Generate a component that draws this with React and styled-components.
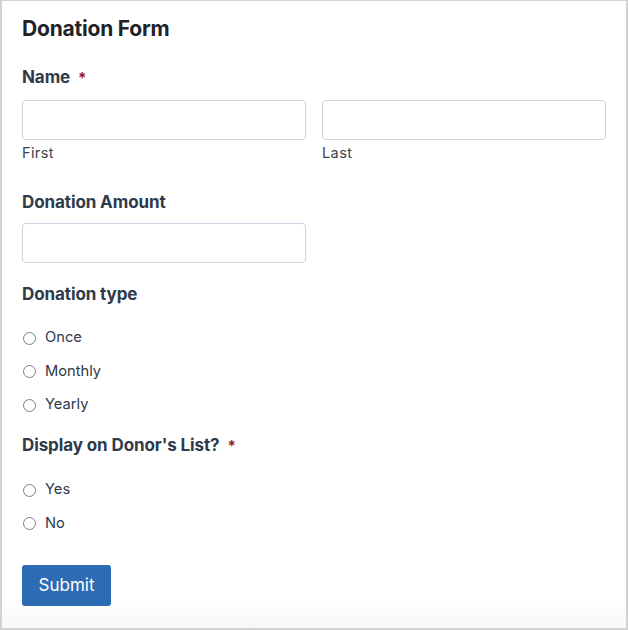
import React from 'react';
import styled, { createGlobalStyle } from 'styled-components';

const GlobalStyle = createGlobalStyle`
  html, body {
    margin: 0;
    padding: 0;
    background: #ffffff;
  }
  * {
    box-sizing: border-box;
  }
`;

const Frame = styled.div`
  width: 628px;
  height: 630px;
  border: 2px solid #d2d2d2;
  border-top-width: 1px;
  border-bottom-width: 2px;
  background: linear-gradient(to bottom, #ffffff 0, #ffffff 600px, #f6f6f6 630px);
  padding: 14px 20px 0 20px;
  font-family: Inter, "Noto Sans", sans-serif;
  color: #2c3338;
`;

const Title = styled.h2`
  margin: 0;
  font-size: 21px;
  font-weight: 700;
  line-height: 28px;
  color: #1d2327;
  letter-spacing: -0.2px;
`;

const Field = styled.div`
  margin-top: ${(p) => p.$top || 0}px;
`;

const Label = styled.div`
  font-size: 17px;
  font-weight: 700;
  line-height: 22px;
  color: #2f3a4a;
  letter-spacing: -0.1px;
`;

const Required = styled.span`
  color: #9b1c1c;
  margin-left: 8px;
  font-size: 15px;
`;

const Row = styled.div`
  display: flex;
  gap: 16px;
  margin-top: ${(p) => p.$top || 0}px;
`;

const Column = styled.div`
  width: 284px;
  display: flex;
  flex-direction: column;
`;

const Input = styled.input`
  width: 100%;
  height: 40px;
  border: 1px solid #c9d5e2;
  border-radius: 4px;
  background: #ffffff;
  padding: 0 10px;
  font: inherit;
  outline: none;
`;

const SubLabel = styled.span`
  margin-top: 4px;
  font-size: 14.5px;
  line-height: 18px;
  color: #3c434a;
  letter-spacing: 0.4px;
`;

const Options = styled.div`
  display: flex;
  flex-direction: column;
  gap: 11.5px;
  margin-top: ${(p) => p.$top || 0}px;
`;

const Option = styled.label`
  display: flex;
  align-items: center;
  gap: 9px;
  font-size: 14.7px;
  line-height: 22px;
  color: #2f3a4a;
`;

const Radio = styled.span`
  width: 13px;
  height: 13px;
  border: 1px solid #7a7f85;
  border-radius: 50%;
  background: #ffffff;
  margin-left: 1px;
  margin-top: 2px;
  flex-shrink: 0;
`;

const Button = styled.button`
  margin-top: 31px;
  width: 89px;
  height: 41px;
  border: none;
  border-radius: 3px;
  background: #2b6cb5;
  color: #ffffff;
  font-family: inherit;
  font-size: 17px;
  font-weight: 400;
  cursor: pointer;
`;

const RadioGroup = ({ options }) => (
  <>
    {options.map((o) => (
      <Option key={o}>
        <Radio />
        {o}
      </Option>
    ))}
  </>
);

export default function App() {
  return (
    <>
      <GlobalStyle />
      <Frame>
        <Title>Donation Form</Title>

        <Field $top={23}>
          <Label>
            Name<Required>*</Required>
          </Label>
          <Row $top={11}>
            <Column>
              <Input />
              <SubLabel>First</SubLabel>
            </Column>
            <Column>
              <Input />
              <SubLabel>Last</SubLabel>
            </Column>
          </Row>
        </Field>

        <Field $top={29}>
          <Label>Donation Amount</Label>
          <Row $top={10}>
            <Column>
              <Input />
            </Column>
          </Row>
        </Field>

        <Field $top={20}>
          <Label>Donation type</Label>
          <Options $top={21}>
            <RadioGroup options={['Once', 'Monthly', 'Yearly']} />
          </Options>
        </Field>

        <Field $top={19}>
          <Label>
            Display on Donor's List?<Required>*</Required>
          </Label>
          <Options $top={21}>
            <RadioGroup options={['Yes', 'No']} />
          </Options>
        </Field>

        <Button>Submit</Button>
      </Frame>
    </>
  );
}
